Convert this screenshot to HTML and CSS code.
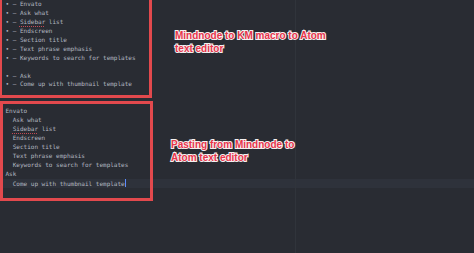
FILE: index.html
```html
<!DOCTYPE html>
<html lang="en">
<head>
<meta charset="utf-8">
<title>Atom editor</title>
<link rel="stylesheet" href="styles.css">
</head>
<body>
<div class="editor">
  <div class="line">• – Envato</div>
  <div class="line">• – Ask what</div>
  <div class="line">• – <span class="misspelled">Sidebar</span> list</div>
  <div class="line">• – Endscreen</div>
  <div class="line">• – Section title</div>
  <div class="line">• – Text phrase emphasis</div>
  <div class="line">• – Keywords to search for templates</div>
  <div class="line"> </div>
  <div class="line">• – Ask</div>
  <div class="line">• – Come up with thumbnail template</div>
  <div class="line"> </div>
  <div class="line"> </div>
  <div class="line">Envato</div>
  <div class="line">  Ask what</div>
  <div class="line">  <span class="misspelled">Sidebar</span> list</div>
  <div class="line">  Endscreen</div>
  <div class="line">  Section title</div>
  <div class="line">  Text phrase emphasis</div>
  <div class="line">  Keywords to search for templates</div>
  <div class="line">Ask</div>
  <div class="line current">  Come up with thumbnail template<span class="cursor"></span></div>
</div>
<div class="wrap-guide"></div>
<div class="callout box1"></div>
<div class="callout box2"></div>
<p class="note note1">Mindnode to KM macro to Atom<br>text editor</p>
<p class="note note2">Pasting from Mindnode to<br>Atom text editor</p>
</body>
</html>
```
FILE: styles.css
```css
html, body {
  margin: 0;
  padding: 0;
  width: 474px;
  height: 253px;
  overflow: hidden;
  background: #292c33;
}
body {
  position: relative;
}
.editor {
  padding-top: 0;
  font-family: "DejaVu Sans Mono", monospace;
  font-size: 6px;
  line-height: 8.95px;
  color: #b3b8c1;
}
.line {
  white-space: pre;
  padding-left: 5.5px;
  height: 8.95px;
}
.line.current {
  background: #2e323b;
}
.misspelled {
  text-decoration: underline dotted #c24a55;
  text-underline-offset: 1.5px;
}
.cursor {
  display: inline-block;
  width: 1px;
  height: 8px;
  background: #5a8cff;
  vertical-align: -1.5px;
}
.wrap-guide {
  position: absolute;
  left: 295px;
  top: 0;
  width: 1px;
  height: 253px;
  background: #30343b;
}
.callout {
  position: absolute;
  border: 3px solid #e2494d;
  box-sizing: border-box;
}
.box1 {
  left: -1px;
  top: -10px;
  width: 153px;
  height: 107.5px;
}
.box2 {
  left: 0;
  top: 101px;
  width: 153px;
  height: 100px;
}
.note {
  position: absolute;
  margin: 0;
  font-family: "Liberation Sans", Arial, sans-serif;
  font-weight: 700;
  font-size: 10px;
  line-height: 13px;
  color: #e8344b;
  -webkit-text-stroke: 2px #f4f0f0;
  paint-order: stroke fill;
}
.note1 {
  left: 175px;
  top: 29px;
}
.note2 {
  left: 171px;
  top: 139px;
  line-height: 12.5px;
}
```
